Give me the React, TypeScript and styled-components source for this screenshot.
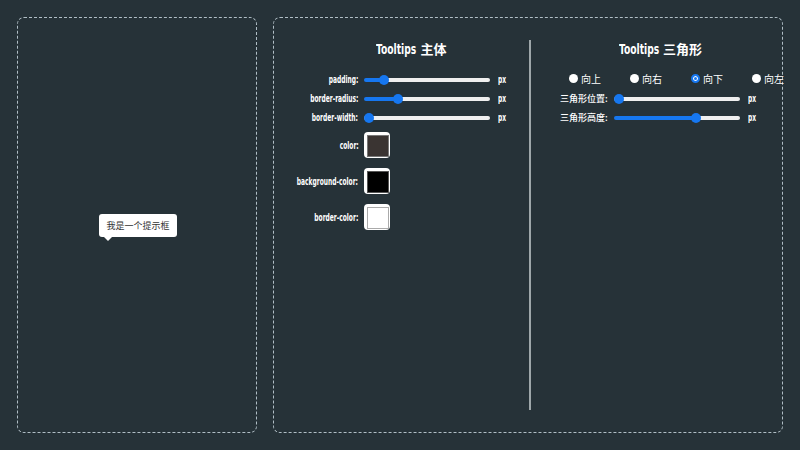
import styled, { createGlobalStyle } from "styled-components";

const GlobalStyle = createGlobalStyle`
  html, body {
    margin: 0;
    padding: 0;
    background: #263238;
  }
  * {
    box-sizing: border-box;
  }
`;

const Page = styled.div`
  display: flex;
  gap: 16px;
  height: 450px;
  padding: 17px;
  font-family: "DejaVu Sans", "Noto Sans CJK SC", sans-serif;
  font-stretch: condensed;
  color: #fff;
`;

const Panel = styled.section<{ $grow?: boolean }>`
  border: 1px dashed #b0bec5;
  border-radius: 7px;
  ${(p) => (p.$grow ? "flex: 1; min-width: 0;" : "width: 240px; flex-shrink: 0;")}
`;

const Preview = styled(Panel)`
  display: flex;
  align-items: center;
  justify-content: center;
`;

const Tooltip = styled.div`
  position: relative;
  margin-left: 2px;
  padding: 6px 7px;
  background: #fff;
  color: #333;
  border-radius: 3px;
  font-family: "Noto Sans CJK SC", sans-serif;
  font-stretch: normal;
  font-size: 9px;
  line-height: 11px;

  &::after {
    content: "";
    position: absolute;
    left: 5px;
    top: 100%;
    border-style: solid;
    border-width: 4px 4px 0 4px;
    border-color: #fff transparent transparent transparent;
  }
`;

const Settings = styled(Panel)`
  display: grid;
  grid-template-columns: 257px minmax(0, 1fr);
  padding: 22px 0;
`;

const Column = styled.div<{ $divider?: boolean }>`
  display: flex;
  flex-direction: column;
  align-items: center;
  ${(p) => (p.$divider ? "border-right: 2px solid #9ea7aa;" : "")}
`;

const Title = styled.h2<{ $offset: number }>`
  margin: 0 0 14px ${(p) => p.$offset}px;
  font-family: "Noto Sans CJK SC", sans-serif;
  font-size: 13px;
  line-height: 18px;
  font-weight: 700;
  white-space: nowrap;
`;

/* the reference uses a very narrow display face; squeeze a condensed one */
const Narrow = styled.span<{ $origin?: string }>`
  display: inline-block;
  font-family: "DejaVu Sans", sans-serif;
  font-stretch: condensed;
  transform: scaleX(0.6);
  transform-origin: ${(p) => p.$origin ?? "right"} center;
`;

const TitleLatin = styled(Narrow)`
  font-size: 14px;
  transform: scaleX(0.73);
  margin-right: -11px;
`;

const Form = styled.div<{ $label?: string; $shift: number }>`
  display: grid;
  grid-template-columns: ${(p) => p.$label ?? "auto"} 126px auto;
  column-gap: 6px;
  row-gap: 4px;
  align-items: center;
  margin-left: ${(p) => p.$shift}px;
`;

const Label = styled.label<{ $cjk?: boolean }>`
  display: flex;
  justify-content: flex-end;
  white-space: nowrap;
  line-height: 15px;
  font-weight: 700;
  font-size: ${(p) => (p.$cjk ? "9px" : "11px")};
  ${(p) => (p.$cjk ? 'font-family: "Noto Sans CJK SC", sans-serif; font-weight: 500;' : "")}
`;

const Unit = styled(Narrow)`
  font-size: 11px;
  font-weight: 700;
  line-height: 15px;
  margin-left: 2px;
`;

const Range = styled.input.attrs({ type: "range" })<{ $pct: number }>`
  -webkit-appearance: none;
  appearance: none;
  width: 126px;
  height: 4px;
  margin: 0;
  border-radius: 2px;
  background: linear-gradient(
    to right,
    #1677f0 0%,
    #1677f0 ${(p) => p.$pct}%,
    #efefef ${(p) => p.$pct}%,
    #efefef 100%
  );

  &::-webkit-slider-thumb {
    -webkit-appearance: none;
    width: 10px;
    height: 10px;
    border-radius: 50%;
    background: #1677f0;
  }
`;

const SwatchRow = styled.div`
  grid-column: 2 / 4;
  padding: 3px 0;
`;

const Swatch = styled.div<{ $color: string; $edge?: string }>`
  width: 26px;
  height: 26px;
  padding: 3px;
  background: #fff;
  border-radius: 4px;

  &::before {
    content: "";
    display: block;
    width: 100%;
    height: 100%;
    background: ${(p) => p.$color};
    border: 1px solid ${(p) => p.$edge ?? p.$color};
  }
`;

const Radios = styled.div`
  align-self: flex-start;
  display: grid;
  grid-template-columns: repeat(4, 61px);
  margin: 0 0 5px 38px;
`;

const RadioLabel = styled.label`
  display: flex;
  align-items: center;
  gap: 3px;
  font-size: 10px;
  line-height: 14px;
  font-family: "Noto Sans CJK SC", sans-serif;
  font-stretch: normal;
  white-space: nowrap;
`;

const Radio = styled.input.attrs({ type: "radio", name: "dir" })`
  -webkit-appearance: none;
  appearance: none;
  width: 9px;
  height: 9px;
  margin: 0 0 2px;
  border-radius: 50%;
  background: #fff;

  &:checked {
    border: 2px solid #1677f0;
    box-shadow: inset 0 0 0 1px #fff;
    background: #1677f0;
  }
`;

const sliders = [
  { name: "padding", value: 13 },
  { name: "border-radius", value: 25 },
  { name: "border-width", value: 0 },
];

const colors = [
  { name: "color", color: "#3a3432", edge: "#777" },
  { name: "background-color", color: "#000", edge: "#555" },
  { name: "border-color", color: "#fff", edge: "#aaa" },
];

const directions = ["向上", "向右", "向下", "向左"];

const triangle = [
  { name: "三角形位置", value: 0 },
  { name: "三角形高度", value: 67 },
];

export default function App() {
  return (
    <>
      <GlobalStyle />
      <Page>
        <Preview>
          <Tooltip>我是一个提示框</Tooltip>
        </Preview>
        <Settings $grow>
          <Column $divider>
            <Title $offset={20}>
              <TitleLatin $origin="left">Tooltips</TitleLatin>
              主体
            </Title>
            <Form $label="64px" $shift={3}>
              {sliders.map((s) => (
                <>
                  <Label key={s.name}>
                    <Narrow>{s.name}:</Narrow>
                  </Label>
                  <Range $pct={s.value} defaultValue={s.value} />
                  <Unit $origin="left">px</Unit>
                </>
              ))}
              {colors.map((c) => (
                <>
                  <Label key={c.name}>
                    <Narrow>{c.name}:</Narrow>
                  </Label>
                  <SwatchRow>
                    <Swatch $color={c.color} $edge={c.edge} />
                  </SwatchRow>
                </>
              ))}
            </Form>
          </Column>
          <Column>
            <Title $offset={8}>
              <TitleLatin $origin="left">Tooltips</TitleLatin>
              三角形
            </Title>
            <Radios>
              {directions.map((d) => (
                <RadioLabel key={d}>
                  <Radio defaultChecked={d === "向下"} />
                  {d}
                </RadioLabel>
              ))}
            </Radios>
            <Form $shift={8}>
              {triangle.map((t) => (
                <>
                  <Label key={t.name} $cjk>
                    {t.name}:
                  </Label>
                  <Range $pct={t.value} defaultValue={t.value} />
                  <Unit $origin="left">px</Unit>
                </>
              ))}
            </Form>
          </Column>
        </Settings>
      </Page>
    </>
  );
}
